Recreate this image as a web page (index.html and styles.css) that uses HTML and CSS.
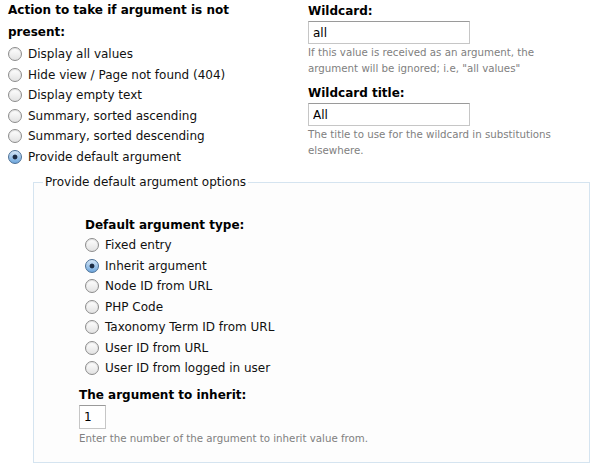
FILE: index.html
```html
<!DOCTYPE html>
<html>
<head>
<meta charset="utf-8">
<link rel="stylesheet" href="styles.css">
</head>
<body>
<div class="top">
  <div class="col-left">
    <div class="label heading">Action to take if argument is not present:</div>
    <div class="radios">
      <label class="radio-row"><input type="radio" name="action"><span>Display all values</span></label>
      <label class="radio-row"><input type="radio" name="action"><span>Hide view / Page not found (404)</span></label>
      <label class="radio-row"><input type="radio" name="action"><span>Display empty text</span></label>
      <label class="radio-row"><input type="radio" name="action"><span>Summary, sorted ascending</span></label>
      <label class="radio-row"><input type="radio" name="action"><span>Summary, sorted descending</span></label>
      <label class="radio-row"><input type="radio" name="action" checked><span>Provide default argument</span></label>
    </div>
  </div>
  <div class="col-right">
    <div class="field">
      <div class="label">Wildcard:</div>
      <input class="text wide" type="text" value="all">
      <div class="desc">If this value is received as an argument, the argument will be ignored; i.e, "all values"</div>
    </div>
    <div class="field second">
      <div class="label">Wildcard title:</div>
      <input class="text wide" type="text" value="All">
      <div class="desc">The title to use for the wildcard in substitutions elsewhere.</div>
    </div>
  </div>
</div>
<fieldset class="options">
  <legend>Provide default argument options</legend>
  <div class="type-block">
    <div class="label">Default argument type:</div>
    <div class="radios">
      <label class="radio-row"><input type="radio" name="type"><span>Fixed entry</span></label>
      <label class="radio-row"><input type="radio" name="type" checked><span>Inherit argument</span></label>
      <label class="radio-row"><input type="radio" name="type"><span>Node ID from URL</span></label>
      <label class="radio-row"><input type="radio" name="type"><span>PHP Code</span></label>
      <label class="radio-row"><input type="radio" name="type"><span>Taxonomy Term ID from URL</span></label>
      <label class="radio-row"><input type="radio" name="type"><span>User ID from URL</span></label>
      <label class="radio-row"><input type="radio" name="type"><span>User ID from logged in user</span></label>
    </div>
  </div>
  <div class="field inherit">
    <div class="label">The argument to inherit:</div>
    <input class="text narrow" type="text" value="1">
    <div class="desc">Enter the number of the argument to inherit value from.</div>
  </div>
</fieldset>
</body>
</html>
```

FILE: styles.css
```css
html, body {
  background: #ffffff;
}
body {
  margin: 0 0 0 8px;
  font-family: "DejaVu Sans", Verdana, sans-serif;
  font-size: 12px;
  color: #111;
}
.top {
  display: flex;
  align-items: flex-start;
}
.col-left {
  width: 250px;
  margin-right: 50px;
}
.col-right {
  width: 270px;
}
.label {
  font-weight: bold;
  color: #000;
  line-height: 20px;
}
.heading {
  line-height: 21.5px;
  margin-top: 0;
}
.col-left .radios {
  margin-top: 1px;
}
.radio-row {
  display: flex;
  align-items: center;
  height: 20.5px;
  white-space: nowrap;
}
.radio-row input {
  -webkit-appearance: none;
  appearance: none;
  width: 14px;
  height: 14px;
  margin: 0 6px 0 0;
  border-radius: 50%;
  border: 1px solid #8c8c8c;
  background: linear-gradient(#ffffff, #e2e2e2);
  box-shadow: inset 0 1px 1px rgba(0,0,0,0.12);
  box-sizing: border-box;
  flex: none;
}
.radio-row input:checked {
  border-color: #4a6f96;
  background:
    radial-gradient(circle, #1c2c44 0, #1c2c44 2px, rgba(28,44,68,0) 2.8px),
    linear-gradient(#d4e6f7, #6fa7dd);
  box-shadow: none;
}
.field .label {
  margin-top: 1px;
}
.field.second {
  margin-top: 7px;
}
.text {
  display: block;
  box-sizing: border-box;
  height: 23px;
  margin: 0;
  padding: 0 4px;
  border: 1px solid #c6c6c6;
  border-top-color: #9a9a9a;
  font-family: "DejaVu Sans", Verdana, sans-serif;
  font-size: 12px;
  color: #000;
  background: #fff;
  outline: none;
}
.text.wide {
  width: 162px;
}
.text.narrow {
  width: 27px;
  height: 24px;
}
.desc {
  font-size: 10.25px;
  line-height: 16px;
  color: #808080;
}
.options {
  margin: 8px 3px 0 25px;
  padding: 26px 0 16px 45px;
  border: 1px solid #d5e4f0;
  background: #fdfdfd;
  min-width: 0;
}
.options legend {
  margin-left: -36px;
  padding: 0 2px;
  line-height: 14px;
  font-size: 12px;
  color: #111;
}
.type-block {
  margin-left: 6px;
}
.field.inherit {
  margin-top: 6px;
}
.field.inherit .label {
  margin-top: 0;
}
.field.inherit .desc {
  margin-top: 1px;
}
```
